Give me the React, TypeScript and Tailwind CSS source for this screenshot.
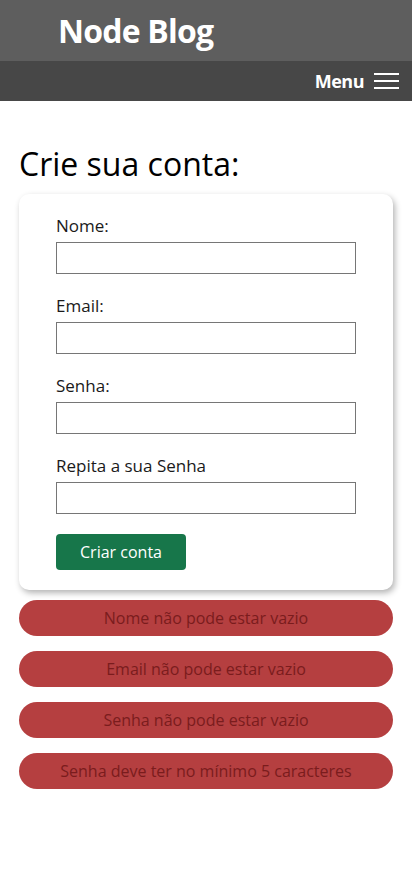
import { useState } from "react";

const fields = ["Nome:", "Email:", "Senha:", "Repita a sua Senha"];

const errors = [
  "Nome não pode estar vazio",
  "Email não pode estar vazio",
  "Senha não pode estar vazio",
  "Senha deve ter no mínimo 5 caracteres",
];

export default function App() {
  const [values, setValues] = useState(["", "", "", ""]);

  return (
    <div className="min-h-screen bg-white" style={{ fontFamily: '"Open Sans", sans-serif' }}>
      <header>
        <div className="h-[61px] bg-[#5e5e5e] pl-[58px] flex items-center">
          <h1 className="text-[32px] font-bold text-white tracking-[-0.8px] leading-none">Node Blog</h1>
        </div>
        <nav className="h-[40px] bg-[#474747] flex items-center justify-end pr-[13px]">
          <span className="text-[18px] font-bold text-white tracking-[-0.5px] mr-[10px]">Menu</span>
          <div className="flex flex-col gap-[5px] w-[25px]">
            <span className="block h-[2px] bg-white" />
            <span className="block h-[2px] bg-white" />
            <span className="block h-[2px] bg-white" />
          </div>
        </nav>
      </header>

      <main className="px-[19px] pt-[43px]">
        <h2 className="text-[32px] leading-[40px] text-black mb-[10px]">Crie sua conta:</h2>

        <form
          className="bg-white rounded-[10px] shadow-[2px_3px_6px_rgba(0,0,0,0.3)] pl-[37px] pr-[37px] pt-[20px] pb-[20px]"
          onSubmit={(e) => e.preventDefault()}
        >
          {fields.map((label, i) => (
            <div key={label} className="mb-[20px]">
              <label className="block text-[17px] leading-[24px] text-[#1a1a1a] mb-[4px]">{label}</label>
              <input
                className="block w-[300px] h-[32px] border border-[#767676] outline-none px-2"
                type={i >= 2 ? "password" : "text"}
                value={values[i]}
                onChange={(e) => {
                  const next = [...values];
                  next[i] = e.target.value;
                  setValues(next);
                }}
              />
            </div>
          ))}
          <button
            type="submit"
            className="w-[130px] h-[36px] bg-[#17764a] text-white text-[16px] rounded-[4px]"
          >
            Criar conta
          </button>
        </form>

        <div className="mt-[10px] flex flex-col gap-[15px]">
          {errors.map((msg) => (
            <div
              key={msg}
              className="h-[36px] rounded-full bg-[#b53f40] text-[#7a1c1d] text-[16px] flex items-center justify-center"
            >
              {msg}
            </div>
          ))}
        </div>
      </main>
    </div>
  );
}
